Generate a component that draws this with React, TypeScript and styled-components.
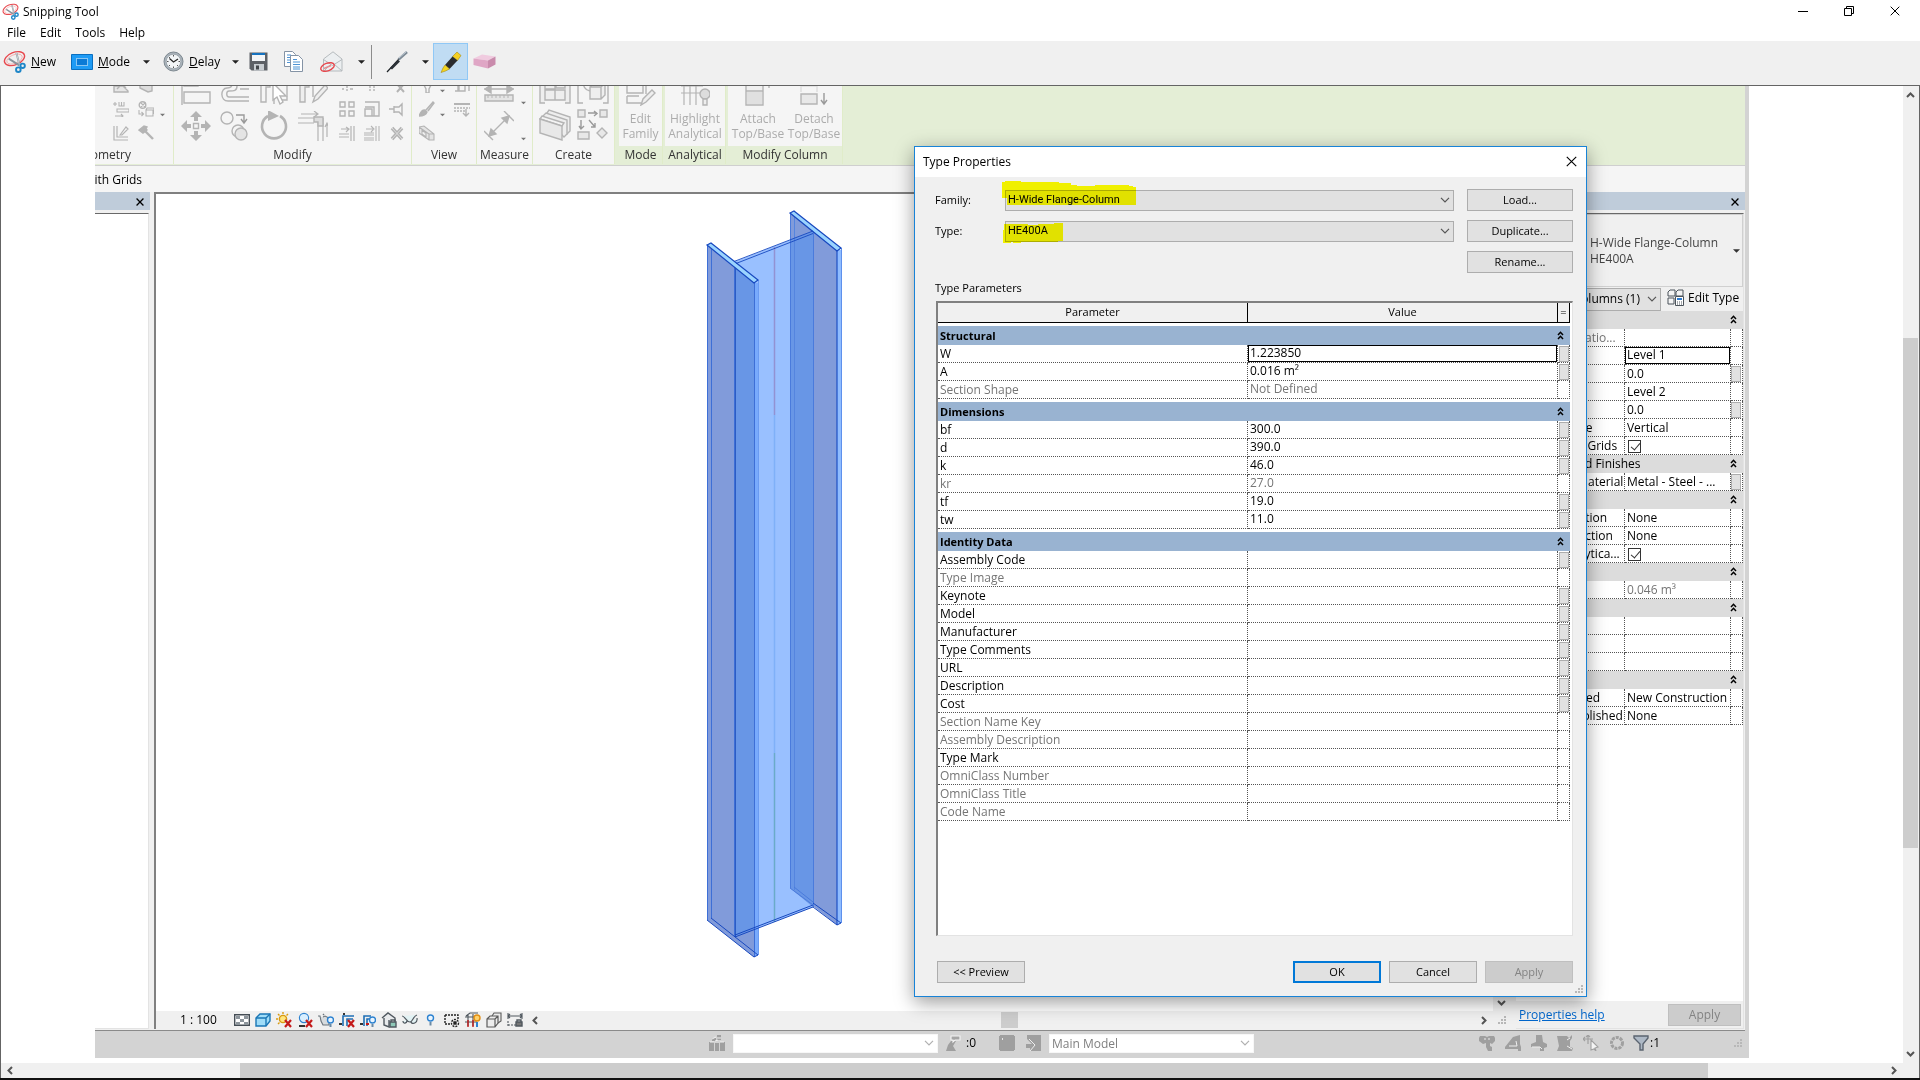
import React from 'react';
import styled, { createGlobalStyle, css } from 'styled-components';

const GlobalStyle = createGlobalStyle`
  * { box-sizing: border-box; }
  html, body { margin: 0; padding: 0; }
  body, button, input, select, table {
    font-family: "Open Sans", "Noto Sans", sans-serif;
    font-size: 12px;
    line-height: 16px;
    color: #000;
  }
  button { padding: 0; margin: 0; border: 0; background: none; }
  svg { display: block; flex: none; }
`;

/* ---------- application shell ---------- */

const Page = styled.div`
  height: 100vh;
  display: flex;
  flex-direction: column;
  overflow: hidden;
  background: #fff;
  border-bottom: 2px solid #111;
`;

const TitleBar = styled.header`
  height: 23px;
  flex: none;
  display: flex;
  align-items: center;
  padding: 0 2px;
`;

const TitleText = styled.h1`
  margin: 0 0 0 4px;
  flex: 1;
  font-size: 12px;
  font-weight: 400;
`;

const WindowButton = styled.button`
  width: 46px;
  height: 22px;
  display: flex;
  justify-content: center;
  align-items: center;
  padding-bottom: 2px;
`;

const MenuBar = styled.nav`
  height: 18px;
  flex: none;
  display: flex;
  padding-left: 7px;
  gap: 14px;
`;

const MenuItem = styled.button`
  height: 18px;
  padding-top: 1px;
`;

const ToolBar = styled.div`
  height: 44px;
  flex: none;
  display: flex;
  align-items: center;
  padding: 0 0 3px 3px;
  background: #f0f0f0;
`;

const SnipButton = styled.button<{ $w: number; $on?: boolean }>`
  width: ${p => p.$w}px;
  height: 37px;
  flex: none;
  display: flex;
  align-items: center;
  justify-content: ${p => (p.$on ? 'center' : 'flex-start')};
  gap: 5px;
  ${p => p.$on && css`background: #c0dcf3; border: 1px solid #90c8f6;`}
`;

const Separator = styled.div`
  width: 1px;
  height: 34px;
  background: #8c8c8c;
`;

const Workspace = styled.main`
  flex: 1;
  min-height: 0;
  display: grid;
  grid-template-columns: minmax(0, 1fr) 16px;
  grid-template-rows: minmax(0, 1fr) 15px;
  border: solid #646464;
  border-width: 1px 1px 0 1px;
`;

const ScrollTrack = styled.div<{ $row?: boolean }>`
  display: flex;
  flex-direction: ${p => (p.$row ? 'row' : 'column')};
  justify-content: space-between;
  align-items: center;
  background: #f0f0f0;
  padding: ${p => (p.$row ? '0 5px' : '5px 1px 5px 0')};
`;

const ScrollSpace = styled.div<{ $grow: number; $thumb?: boolean }>`
  flex: ${p => p.$grow} 1 0;
  align-self: stretch;
  background: ${p => (p.$thumb ? '#cdcdcd' : 'transparent')};
`;

const Corner = styled.div`
  background: #f0f0f0;
`;

/* ---------- captured Revit window ---------- */

const Revit = styled.section`
  position: relative;
  display: flex;
  flex-direction: column;
  min-width: 0;
  min-height: 0;
  margin: 0 154px 5px 94px;
  background: #f0f0f0;
  border-right: 4px solid #d3d3d3;
`;

const Ribbon = styled.div`
  height: 80px;
  flex: none;
  display: flex;
  background: #e4eed6;
  border-bottom: 1px solid #cfcfcf;
  overflow: hidden;
`;

const Panel = styled.div<{ $w: number; $gap?: number }>`
  width: ${p => p.$w}px;
  flex: none;
  margin-left: ${p => p.$gap || 0}px;
  height: 78px;
  display: flex;
  flex-direction: column;
  background: #f5f5f5;
  overflow: hidden;
  border-right: 1px solid #e0ecc9;
`;

const PanelTools = styled.div<{ $pad: number; $gap?: number }>`
  height: 60px;
  flex: none;
  display: flex;
  align-items: flex-end;
  gap: ${p => p.$gap || 0}px;
  padding: 0 0 5px ${p => p.$pad}px;
`;

const PanelLabel = styled.div<{ $ctx?: boolean; $end?: boolean }>`
  height: 18px;
  flex: none;
  display: flex;
  align-items: center;
  justify-content: ${p => (p.$end ? 'flex-end' : 'center')};
  padding-right: ${p => (p.$end ? 42 : 0)}px;
  white-space: nowrap;
  color: #333;
  background: ${p => (p.$ctx ? '#e4eed6' : 'transparent')};
`;

const ToolGrid = styled.div<{ $cols: string; $row: number }>`
  display: grid;
  grid-template-columns: ${p => p.$cols};
  grid-auto-rows: ${p => p.$row}px;
  align-items: end;
`;

const Tool = styled.button`
  display: flex;
  align-items: center;
`;

const BigTool = styled.button<{ $w: number }>`
  width: ${p => p.$w}px;
  flex: none;
  display: flex;
  flex-direction: column;
  align-items: center;
  line-height: 15px;
  color: #acacac;
  white-space: nowrap;
  gap: 5px;
`;

const OptionsBar = styled.div`
  height: 26px;
  flex: none;
  padding-top: 1px;
  background: #f5f5f5;
`;

const OptionsText = styled.label`
  width: 47px;
  height: 25px;
  display: flex;
  align-items: center;
  justify-content: flex-end;
  overflow: hidden;
  white-space: nowrap;
`;

const Body = styled.div`
  flex: 1;
  min-height: 0;
  display: flex;
`;

const Dock = styled.aside<{ $w: number }>`
  width: ${p => p.$w}px;
  flex: none;
  display: flex;
  flex-direction: column;
  gap: 3px;
`;

const DockHeader = styled.div`
  height: 18px;
  flex: none;
  display: flex;
  align-items: center;
  justify-content: flex-end;
  padding: 1px 6px 0 0;
  background: #bfccda;
`;

const DockBox = styled.div`
  flex: 1;
  min-height: 0;
  display: flex;
  flex-direction: column;
  margin: 0 1px 1px 0;
  background: #fff;
  border-top: 1px solid #696969;
  border-right: 1px solid #e3e3e3;
  border-bottom: 1px solid #e3e3e3;
`;

const View = styled.div`
  flex: 1;
  min-width: 0;
  display: flex;
  flex-direction: column;
  margin: 0 6px 1px 4px;
  border: solid #808080;
  border-width: 2px 0 0 2px;
`;

const Stage = styled.div`
  flex: 1;
  min-height: 0;
  display: flex;
`;

const Drawing = styled.div`
  flex: 1;
  position: relative;
  background: #fff;
`;

const BeamPlace = styled.div`
  position: absolute;
  left: 550px;
  top: 16px;
`;

const StageScroll = styled.div`
  width: 17px;
  display: flex;
  flex-direction: column;
  align-items: center;
  justify-content: flex-end;
  padding-bottom: 4px;
`;

const ViewBar = styled.div`
  height: 18px;
  flex: none;
  display: flex;
  align-items: center;
  padding-left: 24px;
`;

const Scale = styled.span`
  width: 54px;
`;

const ViewIcons = styled.div`
  display: flex;
  align-items: center;
  gap: 5px;
`;

const ViewScroll = styled.div`
  flex: 1;
  height: 16px;
  display: flex;
  align-items: center;
  padding: 0 3px 0 8px;
  gap: 10px;
`;

const StatusBar = styled.footer`
  height: 28px;
  flex: none;
  display: flex;
  align-items: center;
  padding: 0 2px 3px 614px;
  border-top: 1px solid #8a8a8a;
  background: #d3d3d3;
`;

const StatusSelect = styled.select`
  appearance: none;
  width: 205px;
  height: 19px;
  padding: 0 2px;
  border: 1px solid #f7f7f7;
  border-radius: 0;
  background: #fff;
  color: #808080;
  opacity: 1;
  line-height: 17px;
`;

const SelectWrap = styled.div<{ $m?: string }>`
  position: relative;
  display: flex;
  margin: ${p => p.$m || 0};
`;

const SelectArrow = styled.span`
  position: absolute;
  right: 4px;
  top: 50%;
  transform: translateY(-50%);
  pointer-events: none;
`;

const StatusGroup = styled.div<{ $gap: number; $m?: string }>`
  display: flex;
  align-items: center;
  gap: ${p => p.$gap}px;
  margin: ${p => p.$m || 0};
`;

/* ---------- properties palette ---------- */

const TypeSelector = styled.button`
  height: 73px;
  flex: none;
  display: flex;
  align-items: center;
  justify-content: space-between;
  padding: 0 2px 0 73px;
  text-align: left;
  color: #444;
  background: #f0f0f0;
  border: 1px solid #d0d0d0;
  white-space: nowrap;
`;

const FilterRow = styled.div`
  height: 24px;
  flex: none;
  display: flex;
  align-items: center;
  background: #f0f0f0;
`;

const FilterSelect = styled.select`
  appearance: none;
  width: 145px;
  height: 23px;
  padding: 0 20px;
  text-align: right;
  text-align-last: right;
  border: 1px solid #adadad;
  border-radius: 0;
  background: #e1e1e1;
`;

const EditType = styled.button`
  display: flex;
  align-items: center;
  gap: 4px;
  margin: 0 0 3px 6px;
  white-space: nowrap;
`;

const PropScroll = styled.div`
  flex: 1;
  min-height: 0;
  overflow: hidden;
`;

const PropTable = styled.table`
  width: 100%;
  table-layout: fixed;
  border-collapse: separate;
  border-spacing: 0;
`;

const PropGroup = styled.th`
  height: 18px;
  padding: 0;
  text-align: left;
  font-weight: 400;
  line-height: 18px;
  background: #dcdcdc;
  white-space: nowrap;
`;

const GroupInner = styled.div`
  display: flex;
  align-items: center;
  justify-content: space-between;
  padding-right: 6px;
`;

const PropCell = styled.td<{ $dim?: boolean; $in?: boolean }>`
  height: 18px;
  padding: 0 0 0 ${p => (p.$in ? 3 : 2)}px;
  line-height: 17px;
  overflow: hidden;
  white-space: nowrap;
  border-right: 1px dotted #555;
  border-bottom: 1px dotted #555;
  color: ${p => (p.$dim ? '#757575' : '#000')};
`;

const CellInput = styled.input<{ $focus?: boolean }>`
  display: block;
  width: 100%;
  height: 17px;
  margin: 0;
  padding: 0 0 2px 1px;
  border: 1px solid ${p => (p.$focus ? '#000' : 'transparent')};
  border-radius: 0;
  outline: none;
  background: #fff;
  &:disabled { color: #757575; }
`;

const FullCell = styled(PropCell)`
  padding: 0;
`;

const Check = styled.input`
  appearance: none;
  display: block;
  width: 13px;
  height: 13px;
  margin: 1px 0 0 1px;
  border: 1px solid #333;
  background: #fff;
  &::after {
    content: '';
    display: block;
    width: 4px;
    height: 8px;
    margin: 0 0 0 4px;
    border: solid #333;
    border-width: 0 1px 1px 0;
    transform: rotate(40deg);
  }
`;

const MiniButton = styled.button`
  display: block;
  width: 10px;
  height: 16px;
  margin: 0 auto;
  background: #e1e1e1;
  border: 1px solid #adadad;
`;

const PropFooter = styled.div`
  height: 27px;
  flex: none;
  display: flex;
  align-items: center;
  justify-content: space-between;
  padding: 0 2px 0 3px;
  background: #f0f0f0;
`;

const HelpLink = styled.a`
  color: #0066cc;
  text-decoration: underline;
`;

/* ---------- dialog ---------- */

const Dialog = styled.div`
  position: absolute;
  left: 819px;
  top: 60px;
  width: 673px;
  display: flex;
  flex-direction: column;
  background: #f0f0f0;
  border: 1px solid #1883d7;
  box-shadow: 0 5px 18px rgba(0, 0, 0, 0.4);
`;

const DialogTitle = styled.div`
  height: 30px;
  display: flex;
  align-items: center;
  justify-content: space-between;
  padding: 0 9px 0 8px;
  background: #fff;
`;

const Heading = styled.h2`
  margin: 0;
  font-size: 12px;
  font-weight: 400;
`;

const CloseButton = styled.button`
  padding-bottom: 2px;
`;

const Form = styled.div`
  display: grid;
  grid-template-columns: 70px 449px 119px;
  row-gap: 9px;
  justify-content: start;
  align-items: center;
  padding: 12px 0 0 20px;
`;

const FieldLabel = styled.label`
  font-size: 11px;
`;

const FormSelect = styled.select`
  appearance: none;
  width: 449px;
  height: 21px;
  padding: 0 2px;
  font-family: Roboto, "Open Sans", sans-serif;
  font-size: 11px;
  border: 1px solid #adadad;
  border-radius: 0;
  background: #e1e1e1;
`;

const Marker = styled.svg`
  position: absolute;
  left: -3px;
  top: -10px;
  mix-blend-mode: multiply;
  pointer-events: none;
`;

const PushButton = styled.button<{ $w: number; $main?: boolean }>`
  width: ${p => p.$w}px;
  height: 22px;
  font-size: 11px;
  background: #e1e1e1;
  border: ${p => (p.$main ? '2px solid #0078d7' : '1px solid #adadad')};
  &:disabled {
    color: #838383;
    background: #cccccc;
    border-color: #bfbfbf;
  }
`;

const PaletteApply = styled(PushButton)`
  font-size: 12px;
`;

const SideButton = styled(PushButton)`
  margin-left: 13px;
  grid-column: 3;
`;

const TableTitle = styled.div`
  padding: 7px 0 5px 20px;
  font-size: 11px;
`;

const TableFrame = styled.div`
  height: 635px;
  margin: 0 13px 0 21px;
  padding-right: 2px;
  background: #fff;
  border: solid;
  border-width: 2px 1px 1px 2px;
  border-color: #808080 #e3e3e3 #e3e3e3 #808080;
`;

const ParamTable = styled.table`
  width: 100%;
  table-layout: fixed;
  border-collapse: separate;
  border-spacing: 0;
`;

const HeadCell = styled.th`
  height: 20px;
  padding: 0 0 2px;
  font-weight: 400;
  font-size: 11px;
  background: #f0f0f0;
  border-right: 1px solid #000;
  border-bottom: 1px solid #000;
`;

const ParamBody = styled.tbody`
  &::before {
    content: '';
    display: block;
    height: 3px;
  }
`;

const ParamGroup = styled.th`
  height: 19px;
  padding: 0 0 0 2px;
  font-size: 11px;
  font-weight: 700;
  text-align: left;
  line-height: 19px;
  background: #99b3d1;
`;

const DialogFooter = styled.div`
  display: flex;
  gap: 8px;
  padding: 25px 13px 13px 22px;
`;

const Push = styled.div`
  flex: 1;
`;

const GripPlace = styled.div`
  position: absolute;
  right: 2px;
  bottom: 2px;
`;

/* ---------- small drawings ---------- */

type IcoProps = { s?: number; h?: number; children: React.ReactNode; c?: string };
const Ico = ({ s = 16, h, children, c = '#b4b4b4' }: IcoProps) => (
  <svg width={s} height={h || s} viewBox={`0 0 ${s} ${h || s}`} fill="none" stroke={c} strokeWidth="1.4" aria-hidden="true">
    {children}
  </svg>
);

const Down = ({ c = '#222', s = 7 }: { c?: string; s?: number }) => (
  <svg width={s} height="4" viewBox="0 0 8 4" aria-hidden="true"><path d="M0 0h8L4 4z" fill={c} /></svg>
);

const Chevron = ({ dir, c = '#555' }: { dir: 'u' | 'd' | 'l' | 'r'; c?: string }) => {
  const d = { u: 'M1 6l3.5-3.500L8 6', d: 'M1 3l3.500 3.500L8 3', l: 'M6 1L2.500 4.500 6 8', r: 'M3 1l3.500 3.500L3 8' }[dir];
  return <svg width="9" height="9" viewBox="0 0 9 9" aria-hidden="true"><path d={d} fill="none" stroke={c} strokeWidth="2" /></svg>;
};

const ComboArrow = ({ c = '#555' }: { c?: string }) => (
  <svg width="10" height="6" viewBox="0 0 10 6" aria-hidden="true"><path d="M1 .8l4 4 4-4" fill="none" stroke={c} strokeWidth="1.2" /></svg>
);

const Collapse = () => (
  <svg width="7" height="10" viewBox="0 0 7 10" aria-hidden="true">
    <path d="M1 4l2.500-2.700L6 4M1 8l2.500-2.700L6 8" fill="none" stroke="#000" strokeWidth="1.500" />
  </svg>
);

const Cross = ({ s = 8, w = 1.6 }: { s?: number; w?: number }) => (
  <svg width={s} height={s} viewBox="0 0 10 10" aria-hidden="true"><path d="M.7.7l8.600 8.600M9.300.7L.7 9.300" stroke="#000" strokeWidth={w} fill="none" /></svg>
);

const Grip = () => (
  <svg width="9" height="9" viewBox="0 0 9 9" fill="#b8b8b8" aria-hidden="true">
    <path d="M6 0h2v2H6zM3 3h2v2H3zM6 3h2v2H6zM0 6h2v2H0zM3 6h2v2H3zM6 6h2v2H6z" />
  </svg>
);

const Snip = ({ s }: { s: number }) => (
  <svg width={s} height={s} viewBox="0 0 24 24" fill="none" aria-hidden="true">
    <ellipse cx="12" cy="9" rx="11" ry="6.500" transform="rotate(-22 12 9)" stroke="#e8484e" strokeWidth="1.500" />
    <ellipse cx="12" cy="9.500" rx="8.500" ry="4.500" transform="rotate(-22 12 9.500)" stroke="#f2a3a5" strokeWidth=".8" />
    <path d="M14 3l3 12M6 9l11 7" stroke="#8a949c" strokeWidth="2" />
    <path d="M14 3l3 12" stroke="#dfe5e8" strokeWidth=".8" />
    <circle cx="16" cy="20.500" r="2.400" stroke="#1e86c8" strokeWidth="2" />
    <circle cx="20.500" cy="16.500" r="2.300" stroke="#1e86c8" strokeWidth="2" />
  </svg>
);

const ModeIcon = () => (
  <svg width="22" height="16" viewBox="0 0 22 16" aria-hidden="true">
    <path d="M.5.5h21v15H.5z" fill="#1e9bf5" stroke="#0a6fc0" />
    <path d="M5.500 4.500h11v7h-11z" fill="#0b7ad6" stroke="#fff" strokeDasharray="1 1" />
  </svg>
);

const ClockIcon = () => (
  <svg width="21" height="21" viewBox="0 0 21 21" fill="none" aria-hidden="true">
    <circle cx="10.500" cy="10.500" r="9.500" fill="#a9b2ba" stroke="#7d8890" />
    <circle cx="10.500" cy="10.500" r="7.300" fill="#f2f5f7" stroke="#8b959c" strokeWidth=".7" />
    <path d="M10.500 4v1.500M10.500 15.500V17M4 10.500h1.500M15.500 10.500H17M6 6l1 1M15 15l-1-1M6 15l1-1" stroke="#444" strokeWidth=".9" />
    <path d="M6.500 7.500l4 3.500 4.500-3" stroke="#222" strokeWidth="1.200" />
  </svg>
);

const SaveIcon = () => (
  <svg width="19" height="19" viewBox="0 0 19 19" aria-hidden="true">
    <path d="M.5.500h18v18H2.500l-2-2z" fill="#5d6166" />
    <path d="M3 1h13v8H3z" fill="#f3f5f7" /><path d="M3 1h13v2H3z" fill="#1673c0" />
    <path d="M5 12h10v6.500H5z" fill="#c9ced2" /><path d="M7 13.500h3v4H7z" fill="#44484c" />
  </svg>
);

const CopyIcon = () => (
  <svg width="19" height="21" viewBox="0 0 19 21" fill="#fff" stroke="#8493a5" aria-hidden="true">
    <path d="M.5.500h8l3 3v12H.5z" /><path d="M6.500 4.500h8l4 4v12h-12z" />
    <path d="M3 4h4M3 6.500h3M3 9h3M3 11.500h3M9 8.500h4M9 11h7M9 13.500h7M9 16h7M9 18h7" stroke="#4f94d4" />
  </svg>
);

const MailIcon = () => (
  <svg width="23" height="21" viewBox="0 0 23 21" fill="none" aria-hidden="true">
    <path d="M3.500 8L13 .8 22 8v12H3.500z" fill="#eceff1" stroke="#b5babd" />
    <path d="M3.500 8.500l9 6 9.500-6M4 20l7-7M22 20l-8-7" stroke="#b5babd" />
    <ellipse cx="7.500" cy="16" rx="7" ry="3.800" transform="rotate(-20 7.500 16)" stroke="#e8484e" strokeWidth="1.400" />
    <path d="M4 17.500l7-3" stroke="#e58b8e" strokeWidth="1.400" />
  </svg>
);

const PenIcon = () => (
  <svg width="23" height="23" viewBox="0 0 23 23" fill="none" aria-hidden="true">
    <path d="M1 22L13 9" stroke="#1d2226" strokeWidth="1.200" />
    <path d="M4 18l8-8 2 1.500-8 8z" fill="#2b3136" /><path d="M12.500 9.500L21 2" stroke="#7d8a95" strokeWidth="2.600" />
    <path d="M13 8l7.500-6.500" stroke="#c3ced8" strokeWidth="1" />
  </svg>
);

const HighlighterIcon = () => (
  <svg width="24" height="24" viewBox="0 0 24 24" aria-hidden="true">
    <path d="M18 2l4 3.500-3.500 5-5-4z" fill="#f4cf22" stroke="#a78a10" strokeWidth=".6" />
    <path d="M13.500 6.500l5 4-8 8.500-4.500-4z" fill="#2b2c2e" />
    <path d="M6 15l4.500 4-4 2-4.500 1.500L4 18z" fill="#f3d51f" stroke="#a78a10" strokeWidth=".6" />
  </svg>
);

const EraserIcon = () => (
  <svg width="23" height="15" viewBox="0 0 23 15" aria-hidden="true">
    <path d="M.5 4.500L9 .5l13.500 2L15 6.500z" fill="#f0cbdf" /><path d="M.5 4.500L15 6.500v8L.5 11z" fill="#dfa6c5" /><path d="M15 6.500l7.500-4v8L15 14.500z" fill="#c98bac" />
  </svg>
);

/* geometry tools */
const geometryIcons = [
  <Ico><path d="M1 9h9l5 5v1H1zM4 12l5-5 4 4" fill="#e6e6e6" /></Ico>,
  <Ico><path d="M2 8l8-2 4 2v6l-4 1-8-4z" fill="#ddd" /></Ico>,
  <span />,
  <Ico><path d="M2 1v4M0 3h4M6 1v4h5V1M8.500 1v4M4 8h12v3H4z" strokeWidth="1.1" /><path d="M2 15h8M8 13l2 2-2 2" strokeWidth="1.1" /></Ico>,
  <Ico><circle cx="4.500" cy="4" r="3.300" /><path d="M2.500 1.500l5 5M7.500 1.500l-5 5M8 9h7v6H8zM8 9l1-2h7v6M1 9v4h4M3.500 11l2 2-2 2" strokeWidth="1.1" /></Ico>,
  <Down c="#777" s={5} />,
  <Ico><path d="M1 1v14h14M4 1v11h11M7 10l6-8 2 2-6 6z" strokeWidth="1.2" /></Ico>,
  <Ico><path d="M1 5l5-4 3 1-1 2 1 1-4 3z" fill="#b4b4b4" /><path d="M7 6l8 8" strokeWidth="2.400" /></Ico>,
  <span />,
];

const alignIcon = <Ico s={30}><path d="M1 1v29M3 2h14v9H3zM3 17h26v11H3z" /></Ico>;
const offsetIcon = <Ico s={30}><path d="M12 1v8c0 3-2 4-5 4-7 0-7 13 1 13h21M17 1v10c0 5-3 5-8 5-3 0-3 6 0 6h20M20 14h9" /></Ico>;
const mirrorPick = <Ico s={30}><path d="M2 2v25h5V12h4V2M15 2v27M19 2h9v23h-9" /><path d="M14 8v17l4-3 3 7 3-2-3-6h6z" fill="#fff" /></Ico>;
const mirrorDraw = <Ico s={30}><path d="M2 2v25h5V12h4V2M15 2v20M19 2h9v8M15 27l2-6L27 10l3 3-10 11z" fill="#eee" /></Ico>;
const moveIcon = <Ico s={30}><path d="M12.500 12.500h5v5h-5z" /><path d="M15 0l6 6h-4v4h-4V6H9zM15 30l6-6h-4v-4h-4v4H9zM0 15l6-6v4h4v4H6v4zM30 15l-6-6v4h-4v4h4v4z" fill="#b4b4b4" stroke="none" /></Ico>;
const copyTool = <Ico s={30}><circle cx="7" cy="7" r="6" /><circle cx="18" cy="20" r="6" /><circle cx="21" cy="23" r="6" fill="#e4e4e4" /><path d="M16 4h8v7M21 8l3 4 3-4" stroke="#9a9a9a" /></Ico>;
const rotateIcon = <Ico s={30}><path d="M21 5a12 12 0 1 1-12 0" strokeWidth="2.6" /><path d="M9-1l11 6-11 5z" fill="#b4b4b4" stroke="none" /></Ico>;
const trimIcon = <Ico s={30}><path d="M0 7h20M0 12h16M20 7v23M25 7v23M3 3h16M16 0l4 3-4 3M29 26V13M27 16l2-4 2 4" strokeWidth="1.2" /><path d="M16 6h9v9h-5v-4h-4z" fill="#ddd" /></Ico>;

const modifySmall = [
  <Ico><path d="M0 8h5M11 8h5M8 4v10M3 12h2M11 12h3" strokeDasharray="3 1" /></Ico>,
  <Ico><path d="M0 8h5M11 8h5M6 4v10M10 4v10" strokeDasharray="3 1" /></Ico>,
  <Ico><path d="M1 4v4M8 7l7 8M15 7l-7 8" strokeWidth="2" /></Ico>,
  <Ico><path d="M1 1h5v5H1zM10 1h5v5h-5zM1 10h5v5H1zM10 10h5v5h-5z" /></Ico>,
  <Ico><path d="M1 1h14v14H1M1 6h9v9M1 8h7v7H1z" /></Ico>,
  <Ico><path d="M0 8h5M5 5v7M5 6h5l3-3v11l-3-3H5" /></Ico>,
  <Ico><path d="M2 4h7M7 2l3 2-3 3M0 9h10M0 12h10M12 1v15M15 1v15" strokeWidth="1.2" /></Ico>,
  <Ico><path d="M2 4h7M7 1l3 3-3 3M0 8h10M0 10h10M0 13h10M0 15h10M12 1v15M15 1v15" strokeWidth="1.1" /></Ico>,
  <Ico><path d="M3 3l10 11M13 3L3 14" strokeWidth="3.500" /><path d="M3 3l10 11M13 3L3 14" stroke="#ddd" strokeWidth="1" /></Ico>,
];

const viewSmall = [
  <Ico><path d="M5 8h7l-2 4v4H7v-4z" /></Ico>,
  <Down c="#777" s={5} />,
  <Ico><path d="M1 5h3v9H1M12 5h3v9M5 3h6v11H5z" /></Ico>,
  <Ico><path d="M0 15c2-5 3-6 6-6l2 2c-1 3-4 4-8 4z" fill="#b4b4b4" /><path d="M7 9l7-8 1 1-6 8" fill="#ddd" /></Ico>,
  <Down c="#777" s={5} />,
  <Ico><path d="M0 3h16" strokeWidth="2" /><path d="M0 7h16M0 10h11" strokeDasharray="2 1" /><path d="M12 8v6M9 12l3 3 3-3" /></Ico>,
  <Ico><path d="M0 2l5-1 10 8v6l-5 0L0 8zM0 2l10 7v6M10 9h5M3 5v4l4 3V8z" fill="#e4e4e4" strokeWidth="1.1" /></Ico>,
];

const measureIcons = [
  <Ico s={30}><path d="M0 14h30M1 14l6-4v8zM29 14l-6-4v8z" fill="#b4b4b4" /><path d="M1 20h28v6H1z" fill="#e4e4e4" /><path d="M4 20v3M8 20v3M12 20v3M16 20v3M20 20v3M24 20v3" strokeWidth="1" /></Ico>,
  <Down c="#777" s={5} />,
  <Ico s={30}><path d="M6 24L24 6M0 20l9 9M20 0l10 10" /><path d="M5 25l2-7 5 5zM25 5l-2 7-5-5z" fill="#b4b4b4" /></Ico>,
  <Down c="#777" s={5} />,
];

const createIcons = [
  <Ico s={32}><path d="M6 1H1v29h5M26 1h5v29h-5M6 7h10v9H6zM17 6h9v9h-9zM6 17h20v10H6zM16 17v10" fill="#eee" /></Ico>,
  <Ico s={32}><path d="M6 1H1v29h5M26 1h5v29h-5" /><path d="M13 14l4-4h11v12l-4 4H13zM13 14h11v12M24 14l4-4" fill="#eee" /><path d="M6 6c0 8 2 11 7 12" /></Ico>,
  <Ico s={32}><path d="M8 4l2-3 21 7v14l-3 3z" fill="#eee" /><path d="M4 7l3-3 21 7v14l-3 3z" fill="#eee" /><path d="M1 10l2-3 22 7-2 3z" fill="#f4f4f4" /><path d="M1 10l22 7v14L1 24z" fill="#e8e8e8" /></Ico>,
  <Ico s={32}><path d="M1 1h7v7H1zM23 1h7v7h-7zM1 23h11v7H1zM25 19l5 5-5 5-5-5z" fill="#e8e8e8" /><path d="M11 4h9M17 2l3 2.500L17 7M4 11v9M2 17l2 3 3-3M12 11l6 7M18 14v4h-4" stroke="#9a9a9a" /></Ico>,
];

const editFamily = <Ico s={30} h={24}><path d="M1 1h16v10H1zM20 1v11M1 14h12M1 14v7h14" /><path d="M15 23l2-6 9-9 3 3-9 9z" fill="#eee" /></Ico>;
const highlightAn = <Ico s={30} h={24}><path d="M1 4h22M4 1v22M10 1v22M16 1v22M1 11h20M4 4l6-3M10 4l6-3" strokeWidth="1.2" /><circle cx="25" cy="12" r="5" fill="#ddd" /><path d="M23 17h4v6h-4z" fill="#eee" /></Ico>;
const attachIcon = <Ico s={30} h={24}><path d="M3 0h17v23H3z" fill="#f0f0f0" /><path d="M4 10h15v12H4z" fill="#e0e0e0" stroke="none" /><path d="M3 9h17M26 0v6" /></Ico>;
const detachIcon = <Ico s={30} h={24}><path d="M2 10V4h16v6" stroke="#ddd" /><path d="M2 12h16v10H2z" fill="#e8e8e8" /><path d="M25 11v10M22 18l3 4 3-4" stroke="#9a9a9a" /></Ico>;

/* view control bar icons */
const redX = <path d="M9 8l6 7M15 8l-6 7" stroke="#c41a1a" strokeWidth="2.200" />;
const bulb = <g><circle cx="12.500" cy="8" r="3" fill="#e9f5ff" stroke="#2d82d0" /><path d="M11.500 12h2v3h-2z" fill="#6b8aa5" stroke="none" /></g>;
const viewIcons: [string, React.ReactNode][] = [
  ['Detail level', <Ico c="#454d55"><path d="M.7 2.700h14.600v10.600H.7z" fill="#fff" /><path d="M2 4h4v3H2zM10 4h4v3h-4zM6 7h4v3H6zM2 10h4v3H2zM10 10h4v3h-4z" fill="#8d959c" stroke="none" /></Ico>],
  ['Visual style', <Ico c="#1a76b5"><path d="M1 6l4-4h10v7l-4 5H1z" fill="#9fdcf8" /><path d="M1 6h10v8M11 6l4-4" /></Ico>],
  ['Sun path', <Ico c="#d99a10"><circle cx="7" cy="7" r="3.600" fill="#ffe681" /><path d="M7 0v2M0 7h2M2 2l1.500 1.500M12 2l-1.500 1.500M2 12l1.500-1.500" />{redX}</Ico>],
  ['Shadows', <Ico c="#2d82d0"><circle cx="7" cy="6" r="4.600" fill="#d9efff" strokeWidth="1.1" /><path d="M2 14h6" stroke="#333" strokeWidth="2" />{redX}</Ico>],
  ['Rendering', <Ico c="#6b747c"><path d="M0 4h2l1 5 2 4h6V6L7 4 5 5" fill="#d7dbde" strokeWidth="1.1" /><path d="M5 3l1-1" />{bulb}</Ico>],
  ['Crop view', <Ico c="#1f6fb5"><path d="M4 14V4h11M8 14V7h6" strokeWidth="1.6" /><path d="M0 12h3M5 1v2" stroke="#333" strokeWidth="2" />{redX}</Ico>],
  ['Crop region', <Ico c="#1f6fb5"><path d="M4 14V4h7M7 14V7h3" strokeWidth="1.6" /><path d="M0 12h3" stroke="#333" strokeWidth="2" /><path d="M6 12h3" stroke="#c41a1a" strokeWidth="2" />{bulb}</Ico>],
  ['Lock 3D view', <Ico c="#50585f"><path d="M1 6l6-5 7 5v3M3 6v7l5 2V8" fill="#e8eaec" /><path d="M9 10h6v5H9z" fill="#8fc9b8" /><path d="M10 10V8h4v2" /></Ico>],
  ['Temporary hide', <Ico c="#50585f"><path d="M0 4c3 0 4 6 8 6 3 0 3-6 7-7M5 8c0 4-4 4-4 1M15 6c1 5-5 7-6 4" fill="#e2f2f4" strokeWidth="1.2" /></Ico>],
  ['Reveal hidden', <Ico c="#2d82d0"><circle cx="7.500" cy="6" r="3" fill="#e9f5ff" /><path d="M6.500 10h2v3.500h-2z" fill="#6b8aa5" stroke="none" /></Ico>],
  ['Temporary view', <Ico c="#222"><path d="M1 3h13v5M1 3v9h6" strokeDasharray="2 1" /><circle cx="11" cy="11" r="3.500" fill="#fff" strokeDasharray="2 1" /><path d="M10 10h2v2h-2z" fill="#222" /></Ico>],
  ['Analytical model', <Ico c="#50585f"><path d="M0 5h12M3 2v12M8 2v12M0 10h12M1 4l4-3h8" strokeWidth="1.1" /><path d="M3 8v7M8 8v7" stroke="#c41a1a" /><circle cx="12" cy="6" r="3" fill="#ffd26a" stroke="#e28e12" /><path d="M11 10h2v5h-2z" fill="#2d82d0" stroke="none" /></Ico>],
  ['Displacement sets', <Ico c="#5a5a5a"><path d="M6 4l2-3h7v8l-3 2" fill="#ececec" strokeWidth="1.1" /><path d="M1 7l3-3h8v7l-3 4H1zM1 7h8v8M9 7l3-3" fill="#ececec" strokeWidth="1.2" /></Ico>],
  ['Constraints', <Ico c="#50585f"><path d="M1 1v6M15 1v6M1 4h14M3 2L1 4l2 2M13 2l2 2-2 2" strokeWidth="1.1" /><path d="M1 13h8M1 9v6" strokeDasharray="2 1" strokeWidth="1.1" /><path d="M9 10h6v4H9z" fill="#777" /><path d="M10 10V8h4v2" /></Ico>],
];

/* status bar icons */
const gray = { fill: '#9f9f9f', stroke: 'none' } as const;
const binoculars = <Ico><path {...gray} d="M0 7h5v9H0zM6 8h4v8H6zM11 7h5v9h-5zM3 3h4v3H3zM8 0h4v5H8z" /><path d="M1 7h4M3 4l4-2M6 6l3-1M11 7h4M8 3h4" stroke="#f0f0f0" strokeWidth="1" /></Ico>;
const editable = <Ico><path {...gray} d="M5 6h5l-3 5 3 5H0l2-6z" /><path d="M5 1h9v4H9L7 7V5H5z" stroke="#f4f4f4" fill="#a5a5a5" strokeWidth="1.1" /></Ico>;
const designBox = <Ico><path {...gray} d="M1 0h14v1h1v14h-1v1H1v-1H0V1h1z" /><path d="M3 4h1" stroke="#fff" /></Ico>;
const pickToEdit = <Ico><path {...gray} d="M2 0h14v16H5v-3H1V9h6L2 4z" /><path d="M4 4l6 6-5 6" stroke="#efefef" strokeWidth="1" /></Ico>;
const statusRight = [
  <Ico><path {...gray} d="M1 1h5l2 1 2-1h5l1 2v3l-3 3-2-1v3l2 1v4H9l-2-4V8L4 9 0 6V3z" /><path d="M5 4h2M9 4h2" stroke="#eee" strokeWidth="1" /></Ico>,
  <Ico><path {...gray} d="M0 12l4-5 4-5 7-2v9l1 3v4h-3v-2H0z" /><path d="M4 11h8l-1-5" stroke="#eee" strokeWidth="1" /></Ico>,
  <Ico><path {...gray} d="M5 0h6l1 7 4 2v3l-3 1v3H9v-4H0V9l5-2z" /><path d="M1 12h8l2 2" stroke="#eee" strokeWidth="1" /></Ico>,
  <Ico><path {...gray} d="M0 1h10l2 2 3-3v3l-2 3v6l3 1-1 3H0l2-5z" /><path d="M10 5l3-2M10 11l5 3" stroke="#eee" strokeWidth="1" /></Ico>,
  <Ico c="#a0a0a0"><path d="M5 0v9M0 4h10M3 2l2-2 2 2M2 2L0 4l2 2" strokeWidth="1.2" /><path d="M8 5l7 7-3 1 1 3-2-2-3 1z" fill="#f4f4f4" strokeWidth="1.1" /></Ico>,
  <Ico c="#a0a0a0"><circle cx="8" cy="8" r="5.500" strokeWidth="3" strokeDasharray="3 1" /></Ico>,
];
const funnel = <Ico c="#5b6470"><path d="M1 1h14v2L10 9v6H7V9L1 3z" fill="#aeb9c6" /></Ico>;

const Beam = () => (
  <svg width="137" height="750" viewBox="0 0 137 750" aria-label="H-Wide Flange-Column HE400A" role="img">
    <path d="M28 52L107 21V697L28 727z" fill="#99c0ff" />
    <path d="M84 3L131 40V715L84 678z" fill="#819bda" />
    <path d="M84 30L107 21V697L84 678z" fill="#6896e6" />
    <path d="M131 40h4V713l-4 2z" fill="#8fbcff" />
    <path d="M84.500 3V678M107.500 22V697" stroke="#4a7bdc" fill="none" />
    <path d="M88.500 5V680" stroke="#5585df" fill="none" />
    <path d="M131 40V715" stroke="#1d4fc4" fill="none" strokeWidth="1.200" />
    <path d="M135.500 38V713" stroke="#5e90ec" fill="none" />
    <path d="M1 35L48 73V747L1 710z" fill="#819bda" />
    <path d="M28 54L48 73V719L28 727z" fill="#6896e6" />
    <path d="M48 73h4V745l-4 2z" fill="#78aafc" />
    <path d="M1.500 35V710M5.500 38V708M28.500 54V727M48.500 73V747" stroke="#3d6fd6" fill="none" />
    <path d="M29.500 54V727" stroke="#2c5cc4" fill="none" />
    <path d="M52.500 70V745" stroke="#6a9bf2" fill="none" />
    <path d="M68.500 37V205" stroke="#9292d2" fill="none" strokeWidth="1.500" />
    <path d="M68.500 205V543" stroke="#7fb0f8" fill="none" strokeWidth="1.500" />
    <path d="M68.500 543V712" stroke="#6aabc8" fill="none" strokeWidth="1.500" />
    <path d="M1 35l4-2L52 70l-4 3z" fill="#9bd4ff" stroke="#1748bf" strokeWidth="1.200" />
    <path d="M84 3l4-2 47 37-4 3z" fill="#9bd4ff" stroke="#1748bf" strokeWidth="1.200" />
    <path d="M28 51.500L107 21M30 53.500L107 23.500" stroke="#1748bf" fill="none" strokeWidth=".9" />
    <path d="M1 710l47 37 4-2M5 708l47 37M29 727l78-30M29 725l78-30M107 697l24 18 4-2-28-20" stroke="#1748bf" fill="none" />
    <path d="M84 678l23 17M88 677l19 15" stroke="#4a7bdc" fill="none" />
  </svg>
);

/* ---------- data ---------- */

type Param = { n: string; v?: string; dim?: boolean; btn?: boolean; focus?: boolean };
const params: { title: string; rows: Param[] }[] = [
  { title: 'Structural', rows: [
    { n: 'W', v: '1.223850', btn: true, focus: true },
    { n: 'A', v: '0.016 m²', btn: true },
    { n: 'Section Shape', v: 'Not Defined', dim: true },
  ] },
  { title: 'Dimensions', rows: [
    { n: 'bf', v: '300.0', btn: true },
    { n: 'd', v: '390.0', btn: true },
    { n: 'k', v: '46.0', btn: true },
    { n: 'kr', v: '27.0', dim: true },
    { n: 'tf', v: '19.0', btn: true },
    { n: 'tw', v: '11.0', btn: true },
  ] },
  { title: 'Identity Data', rows: [
    { n: 'Assembly Code', btn: true },
    { n: 'Type Image', dim: true },
    { n: 'Keynote', btn: true },
    { n: 'Model', btn: true },
    { n: 'Manufacturer', btn: true },
    { n: 'Type Comments', btn: true },
    { n: 'URL', btn: true },
    { n: 'Description', btn: true },
    { n: 'Cost', btn: true },
    { n: 'Section Name Key', dim: true },
    { n: 'Assembly Description', dim: true },
    { n: 'Type Mark' },
    { n: 'OmniClass Number', dim: true },
    { n: 'OmniClass Title', dim: true },
    { n: 'Code Name', dim: true },
  ] },
];

type Prop = Param & { check?: boolean; dimName?: boolean };
const props: { title: string; rows: Prop[] }[] = [
  { title: 'Constraints', rows: [
    { n: 'Column Locatio...', dimName: true },
    { n: 'Base Level', v: 'Level 1', focus: true },
    { n: 'Base Offset', v: '0.0', btn: true },
    { n: 'Top Level', v: 'Level 2' },
    { n: 'Top Offset', v: '0.0', btn: true },
    { n: 'Column Style', v: 'Vertical' },
    { n: 'Moves With Grids', check: true },
  ] },
  { title: 'Materials and Finishes', rows: [{ n: 'Structural Material', v: 'Metal - Steel - ...', btn: true }] },
  { title: 'Structural', rows: [
    { n: 'Top Connection', v: 'None' },
    { n: 'Base Connection', v: 'None' },
    { n: 'Enable Analytica...', check: true },
  ] },
  { title: 'Dimensions', rows: [{ n: 'Volume', v: '0.046 m³', dim: true }] },
  { title: 'Identity Data', rows: [{ n: 'Image' }, { n: 'Comments' }, { n: 'Mark' }] },
  { title: 'Phasing', rows: [
    { n: 'Phase Created', v: 'New Construction' },
    { n: 'Phase Demolished', v: 'None' },
  ] },
];

/* ---------- parts ---------- */

const Tools = ({ icons }: { icons: React.ReactElement[] }) => (
  <>
    {icons.map((icon, i) => (icon.type === 'span' ? <span key={i} /> : <Tool key={i}>{icon}</Tool>))}
  </>
);

const RibbonBar = () => (
  <Ribbon>
    <Panel $w={79}>
      <PanelTools $pad={18}>
        <ToolGrid $cols="25px 22px 8px" $row={24}><Tools icons={geometryIcons} /></ToolGrid>
      </PanelTools>
      <PanelLabel $end>Geometry</PanelLabel>
    </Panel>
    <Panel $w={238}>
      <PanelTools $pad={7}>
        <ToolGrid $cols="39px 39px 39px 41px" $row={36}>
          <Tools icons={[alignIcon, offsetIcon, mirrorPick, mirrorDraw, moveIcon, copyTool, rotateIcon, trimIcon]} />
        </ToolGrid>
        <ToolGrid $cols="25px 25px 16px" $row={24}><Tools icons={modifySmall} /></ToolGrid>
      </PanelTools>
      <PanelLabel>Modify</PanelLabel>
    </Panel>
    <Panel $w={65}>
      <PanelTools $pad={7}>
        <ToolGrid $cols="21px 14px 16px" $row={24}><Tools icons={viewSmall} /></ToolGrid>
      </PanelTools>
      <PanelLabel>View</PanelLabel>
    </Panel>
    <Panel $w={56}>
      <PanelTools $pad={7}>
        <ToolGrid $cols="37px 8px" $row={36}><Tools icons={measureIcons} /></ToolGrid>
      </PanelTools>
      <PanelLabel>Measure</PanelLabel>
    </Panel>
    <Panel $w={82}>
      <PanelTools $pad={6}>
        <ToolGrid $cols="38px 32px" $row={36}><Tools icons={createIcons} /></ToolGrid>
      </PanelTools>
      <PanelLabel>Create</PanelLabel>
    </Panel>
    <Panel $w={44} $gap={4}>
      <PanelTools $pad={0}><BigTool $w={43}>{editFamily}<span>Edit<br />Family</span></BigTool></PanelTools>
      <PanelLabel $ctx>Mode</PanelLabel>
    </Panel>
    <Panel $w={61} $gap={2}>
      <PanelTools $pad={0}><BigTool $w={60}>{highlightAn}<span>Highlight<br />Analytical</span></BigTool></PanelTools>
      <PanelLabel $ctx>Analytical</PanelLabel>
    </Panel>
    <Panel $w={115} $gap={2}>
      <PanelTools $pad={3} $gap={2}>
        <BigTool $w={54}>{attachIcon}<span>Attach<br />Top/Base</span></BigTool>
        <BigTool $w={54}>{detachIcon}<span>Detach<br />Top/Base</span></BigTool>
      </PanelTools>
      <PanelLabel $ctx>Modify Column</PanelLabel>
    </Panel>
  </Ribbon>
);

const PropertiesPalette = () => (
  <Dock $w={229}>
    <DockHeader><button aria-label="Close properties"><Cross /></button></DockHeader>
    <DockBox>
      <TypeSelector><span>H-Wide Flange-Column<br />HE400A</span><Down c="#333" /></TypeSelector>
      <FilterRow>
        <SelectWrap>
          <FilterSelect aria-label="Selection filter"><option>Columns (1)</option></FilterSelect>
          <SelectArrow><ComboArrow /></SelectArrow>
        </SelectWrap>
        <EditType>
          <svg width="17" height="17" viewBox="0 0 17 17" fill="none" stroke="#4b535a" aria-hidden="true">
            <path d="M1 3l2-2h5v6H1zM9 3l2-2h5v6H9zM1 9h6v6H1z" fill="#f4f4f4" />
            <path d="M8.500 7.500h8v9h-8z" fill="#fff" /><path d="M10 9h5v2h-5z" fill="#2e7bd0" stroke="none" /><path d="M10 13h1M12 13h1M14 13h1M10 15h1M12 15h1M14 15h1" />
          </svg>
          Edit Type
        </EditType>
      </FilterRow>
      <PropScroll>
        <PropTable>
          <colgroup><col /><col width="106" /><col width="12" /></colgroup>
          {props.map(group => (
            <tbody key={group.title}>
              <tr><PropGroup colSpan={3}><GroupInner><span>{group.title}</span><Collapse /></GroupInner></PropGroup></tr>
              {group.rows.map(row => (
                <tr key={row.n}>
                  <PropCell $in $dim={row.dimName}>{row.n}</PropCell>
                  {row.focus
                    ? <FullCell><CellInput $focus aria-label={row.n} defaultValue={row.v} /></FullCell>
                    : <PropCell $dim={row.dim}>{row.check ? <Check type="checkbox" defaultChecked aria-label={row.n} /> : row.v}</PropCell>}
                  <FullCell>{row.btn && <MiniButton aria-label={`Associate ${row.n}`} />}</FullCell>
                </tr>
              ))}
            </tbody>
          ))}
        </PropTable>
      </PropScroll>
      <PropFooter>
        <HelpLink href="#help">Properties help</HelpLink>
        <PaletteApply $w={73} disabled>Apply</PaletteApply>
      </PropFooter>
    </DockBox>
  </Dock>
);

const TypeProperties = () => (
  <Dialog role="dialog" aria-label="Type Properties">
    <DialogTitle>
      <Heading>Type Properties</Heading>
      <CloseButton aria-label="Close"><Cross s={11} w={1} /></CloseButton>
    </DialogTitle>
    <Form>
      <FieldLabel htmlFor="family">Family:</FieldLabel>
      <SelectWrap>
        <FormSelect id="family"><option>H-Wide Flange-Column</option></FormSelect>
        <SelectArrow><ComboArrow /></SelectArrow>
        <Marker width="134" height="26" viewBox="0 0 134 26" aria-hidden="true">
          <path d="M0 2h3v-1h16v1h38v1h12v2h6v1h18v-1h34v1h4v1h3v18H5v-7H0z" fill="#ff0" />
        </Marker>
      </SelectWrap>
      <SideButton $w={106}>Load...</SideButton>
      <FieldLabel htmlFor="type">Type:</FieldLabel>
      <SelectWrap>
        <FormSelect id="type"><option>HE400A</option></FormSelect>
        <SelectArrow><ComboArrow /></SelectArrow>
        <Marker width="134" height="34" viewBox="0 0 134 34" aria-hidden="true">
          <path d="M2 13h24v1h10v-1h16v-1h9v18h-5v1H19v1h-8v-1H9v1H1v-13h1z" fill="#ff0" />
        </Marker>
      </SelectWrap>
      <SideButton $w={106}>Duplicate...</SideButton>
      <SideButton $w={106}>Rename...</SideButton>
    </Form>
    <TableTitle>Type Parameters</TableTitle>
    <TableFrame>
      <ParamTable>
        <colgroup><col /><col width="310" /><col width="12" /></colgroup>
        <thead><tr><HeadCell>Parameter</HeadCell><HeadCell>Value</HeadCell><HeadCell>=</HeadCell></tr></thead>
        {params.map(group => (
          <ParamBody key={group.title}>
            <tr><ParamGroup colSpan={3}><GroupInner><span>{group.title}</span><Collapse /></GroupInner></ParamGroup></tr>
            {group.rows.map(row => (
              <tr key={row.n}>
                <PropCell $dim={row.dim}>{row.n}</PropCell>
                <FullCell><CellInput $focus={row.focus} disabled={row.dim} aria-label={row.n} defaultValue={row.v || ''} /></FullCell>
                <FullCell>{row.btn && <MiniButton aria-label={`Associate ${row.n}`} />}</FullCell>
              </tr>
            ))}
          </ParamBody>
        ))}
      </ParamTable>
    </TableFrame>
    <DialogFooter>
      <PushButton $w={88}>&lt;&lt; Preview</PushButton>
      <Push />
      <PushButton $w={88} $main>OK</PushButton>
      <PushButton $w={88}>Cancel</PushButton>
      <PushButton $w={88} disabled>Apply</PushButton>
    </DialogFooter>
    <GripPlace><Grip /></GripPlace>
  </Dialog>
);

export default function App() {
  return (
    <Page>
      <GlobalStyle />
      <TitleBar>
        <Snip s={17} />
        <TitleText>Snipping Tool</TitleText>
        <WindowButton aria-label="Minimize"><Ico s={10} c="#000"><path d="M0 5.500h10" strokeWidth="1" /></Ico></WindowButton>
        <WindowButton aria-label="Restore"><Ico s={10} c="#000"><path d="M.5 2.500h7v7h-7zM2.500 2V.5h7v7H8" strokeWidth="1" /></Ico></WindowButton>
        <WindowButton aria-label="Close window"><Cross s={10} w={1} /></WindowButton>
      </TitleBar>
      <MenuBar>
        <MenuItem>File</MenuItem><MenuItem>Edit</MenuItem><MenuItem>Tools</MenuItem><MenuItem>Help</MenuItem>
      </MenuBar>
      <ToolBar>
        <SnipButton $w={68}><Snip s={23} /><span><u>N</u>ew</span></SnipButton>
        <SnipButton $w={72}><ModeIcon /><span><u>M</u>ode</span></SnipButton>
        <SnipButton $w={20} aria-label="Mode options"><Down /></SnipButton>
        <SnipButton $w={69}><ClockIcon /><span><u>D</u>elay</span></SnipButton>
        <SnipButton $w={17} aria-label="Delay options"><Down /></SnipButton>
        <SnipButton $w={35} aria-label="Save"><SaveIcon /></SnipButton>
        <SnipButton $w={36} aria-label="Copy"><CopyIcon /></SnipButton>
        <SnipButton $w={38} aria-label="Send"><MailIcon /></SnipButton>
        <SnipButton $w={13} aria-label="Send options"><Down /></SnipButton>
        <Separator />
        <SnipButton $w={50} aria-label="Pen"><Push /><PenIcon /><Push /></SnipButton>
        <SnipButton $w={11} aria-label="Pen options"><Down /></SnipButton>
        <SnipButton $w={35} $on aria-label="Highlighter"><HighlighterIcon /></SnipButton>
        <SnipButton $w={27} aria-label="Eraser"><Push /><EraserIcon /></SnipButton>
      </ToolBar>
      <Workspace>
        <Revit>
          <RibbonBar />
          <OptionsBar><OptionsText>Moves With Grids</OptionsText></OptionsBar>
          <Body>
            <Dock $w={55}>
              <DockHeader><button aria-label="Close browser"><Cross /></button></DockHeader>
              <DockBox />
            </Dock>
            <View>
              <Stage>
                <Drawing><BeamPlace><Beam /></BeamPlace></Drawing>
                <StageScroll><Chevron dir="d" /></StageScroll>
              </Stage>
              <ViewBar>
                <Scale>1 : 100</Scale>
                <ViewIcons>
                  {viewIcons.map(([name, icon]) => <Tool key={name} aria-label={name}>{icon}</Tool>)}
                </ViewIcons>
                <ViewScroll>
                  <Chevron dir="l" />
                  <ScrollSpace $grow={27} />
                  <ScrollSpace $grow={1} $thumb />
                  <ScrollSpace $grow={27} />
                  <Chevron dir="r" />
                  <Grip />
                </ViewScroll>
              </ViewBar>
            </View>
            <PropertiesPalette />
          </Body>
          <StatusBar>
            {binoculars}
            <SelectWrap $m="0 8px 0 8px">
              <StatusSelect aria-label="Active workset" disabled><option></option></StatusSelect>
              <SelectArrow><ComboArrow c="#b0b0b0" /></SelectArrow>
            </SelectWrap>
            <StatusGroup $gap={4}>{editable}<span>:0</span></StatusGroup>
            <StatusGroup $gap={10} $m="0 8px 0 23px">{designBox}{pickToEdit}</StatusGroup>
            <SelectWrap>
              <StatusSelect aria-label="Design option" disabled><option>Main Model</option></StatusSelect>
              <SelectArrow><ComboArrow c="#b0b0b0" /></SelectArrow>
            </SelectWrap>
            <Push />
            <StatusGroup $gap={10} $m="0 8px 0 0">
              {statusRight.map((icon, i) => <React.Fragment key={i}>{icon}</React.Fragment>)}
            </StatusGroup>
            <StatusGroup $gap={1} $m="0 74px 0 0">{funnel}<span>:1</span></StatusGroup>
            <Grip />
          </StatusBar>
          <TypeProperties />
        </Revit>
        <ScrollTrack>
          <Chevron dir="u" />
          <ScrollSpace $grow={238} />
          <ScrollSpace $grow={510} $thumb />
          <ScrollSpace $grow={201} />
          <Chevron dir="d" />
        </ScrollTrack>
        <ScrollTrack $row>
          <Chevron dir="l" />
          <ScrollSpace $grow={225} />
          <ScrollSpace $grow={1468} $thumb />
          <ScrollSpace $grow={181} />
          <Chevron dir="r" />
        </ScrollTrack>
        <Corner />
      </Workspace>
    </Page>
  );
}
